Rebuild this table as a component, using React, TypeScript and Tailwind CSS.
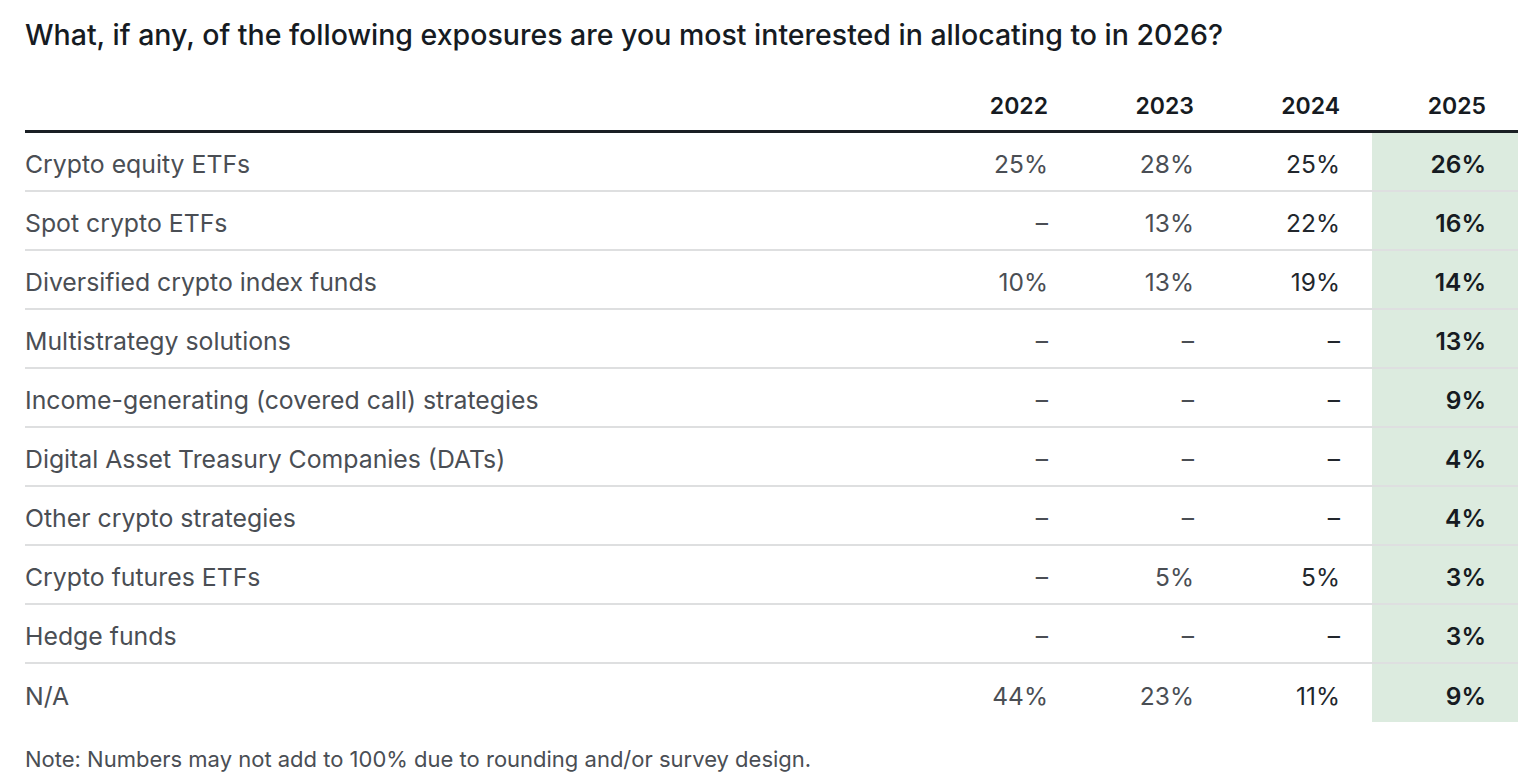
const years = ["2022", "2023", "2024", "2025"]

const rows: { label: string; values: string[] }[] = [
  { label: "Crypto equity ETFs", values: ["25%", "28%", "25%", "26%"] },
  { label: "Spot crypto ETFs", values: ["–", "13%", "22%", "16%"] },
  { label: "Diversified crypto index funds", values: ["10%", "13%", "19%", "14%"] },
  { label: "Multistrategy solutions", values: ["–", "–", "–", "13%"] },
  { label: "Income-generating (covered call) strategies", values: ["–", "–", "–", "9%"] },
  { label: "Digital Asset Treasury Companies (DATs)", values: ["–", "–", "–", "4%"] },
  { label: "Other crypto strategies", values: ["–", "–", "–", "4%"] },
  { label: "Crypto futures ETFs", values: ["–", "5%", "5%", "3%"] },
  { label: "Hedge funds", values: ["–", "–", "–", "3%"] },
  { label: "N/A", values: ["44%", "23%", "11%", "9%"] },
]

export default function App() {
  return (
    <div className="min-h-screen bg-white pl-[25px] pr-[18px] pt-[13px] font-['Inter',sans-serif]">
      <h1 className="text-[28.5px] font-medium leading-[44px] text-[#161b22]">
        What, if any, of the following exposures are you most interested in allocating to in 2026?
      </h1>

      <table className="mt-[34px] w-full border-collapse">
        <thead>
          <tr className="border-b-[3px] border-[#1a1f24]">
            <th className="w-auto" />
            {years.map((y) => (
              <th
                key={y}
                className="w-[146px] pb-[9px] pr-[32px] text-right text-[23px] font-semibold leading-[30px] text-[#161b22]"
              >
                {y}
              </th>
            ))}
          </tr>
        </thead>
        <tbody>
          {rows.map((row, i) => (
            <tr
              key={row.label}
              className={i < rows.length - 1 ? "h-[59px] border-b-2 border-[#dedfe0]" : "h-[59px]"}
            >
              <td className="pt-[6px] text-[24.8px] leading-[30px] text-[#4a4e54]">{row.label}</td>
              {row.values.map((v, j) => (
                <td
                  key={j}
                  className={
                    j === 3
                      ? "bg-[#dcebdf] pt-[6px] pr-[32px] text-right text-[24.5px] font-semibold leading-[30px] text-[#161b22]"
                      : j === 2
                        ? "pt-[6px] pr-[32px] text-right text-[24.5px] leading-[30px] text-[#22272d]"
                        : "pt-[6px] pr-[32px] text-right text-[24.5px] leading-[30px] text-[#4a4e54]"
                  }
                >
                  {v}
                </td>
              ))}
            </tr>
          ))}
        </tbody>
      </table>

      <p className="mt-[22px] text-[22px] leading-[30px] text-[#4a4e54]">
        Note: Numbers may not add to 100% due to rounding and/or survey design.
      </p>
    </div>
  )
}
